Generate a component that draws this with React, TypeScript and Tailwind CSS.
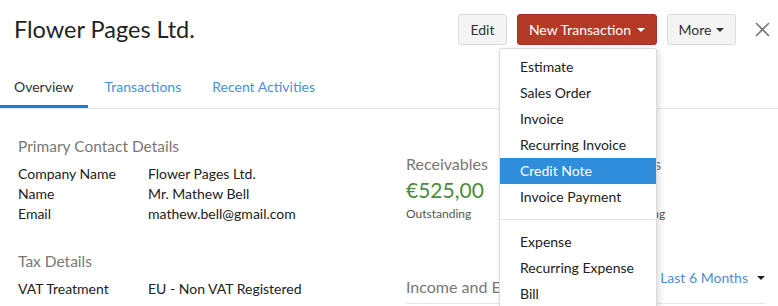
import React from "react";

const font = { fontFamily: "Lato, 'Open Sans', Arial, sans-serif" };

export default function App() {
  const group1 = ["Estimate", "Sales Order", "Invoice", "Recurring Invoice", "Credit Note", "Invoice Payment"];
  const group2 = ["Expense", "Recurring Expense", "Bill"];
  return (
    <div className="relative w-[778px] h-[306px] overflow-hidden bg-white text-[#222]" style={font}>
      {/* Header */}
      <div className="flex items-start justify-between pl-[14px] pr-[8px] pt-[14px]">
        <h1 className="text-[23.5px] leading-[31px] text-[#222]">Flower Pages Ltd.</h1>
        <div className="flex items-center">
          <button className="h-[31px] w-[49px] rounded-[3px] border border-[#dcdcdc] bg-[#f4f4f4] text-[14px] text-[#333]">
            Edit
          </button>
          <div className="relative ml-[10px]">
            <button className="flex h-[31px] w-[140px] items-center justify-center gap-[6px] rounded-[3px] border border-[#a33223] bg-[#b43a27] text-[14px] text-white">
              New Transaction
              <span className="mt-[1px] h-0 w-0 border-x-[4px] border-t-[4px] border-x-transparent border-t-white" />
            </button>
          </div>
          <button className="ml-[10px] flex h-[31px] w-[69px] items-center justify-center gap-[5px] rounded-[3px] border border-[#dcdcdc] bg-[#f4f4f4] text-[14px] text-[#333]">
            More
            <span className="mt-[1px] h-0 w-0 border-x-[4px] border-t-[4px] border-x-transparent border-t-[#333]" />
          </button>
          <svg className="ml-[19px]" width="15" height="15" viewBox="0 0 15 15">
            <path d="M1 1 L14 14 M14 1 L1 14" stroke="#777" strokeWidth="1.6" fill="none" />
          </svg>
        </div>
      </div>

      {/* Tabs */}
      <div className="mt-[31px] flex gap-[3px] border-b border-[#e6e6e6] text-[14px]">
        <div className="border-b-[3px] border-[#1b7fd6] px-[14px] pb-[8px] text-[#333]">Overview</div>
        <div className="px-[14px] pb-[8px] text-[#4a8fd8]">Transactions</div>
        <div className="px-[14px] pb-[8px] text-[#4a8fd8]">Recent Activities</div>
      </div>

      {/* Body */}
      <div className="flex pt-[27px]">
        <div className="w-[406px] shrink-0 pl-[18px]">
          <div className="text-[15.5px] leading-[20px] text-[#777]">Primary Contact Details</div>
          <div className="mt-[8px] grid grid-cols-[130px_1fr] text-[14px] leading-[20px] text-[#222]">
            <div>Company Name</div>
            <div>Flower Pages Ltd.</div>
            <div>Name</div>
            <div>Mr. Mathew Bell</div>
            <div>Email</div>
            <div>mathew.bell@gmail.com</div>
          </div>
          <div className="mt-[27px] text-[15.5px] leading-[20px] text-[#777]">Tax Details</div>
          <div className="mt-[8px] grid grid-cols-[130px_1fr] text-[14px] leading-[20px] text-[#222]">
            <div>VAT Treatment</div>
            <div>EU - Non VAT Registered</div>
          </div>
        </div>
        <div className="flex-1 pr-[13px]">
          <div className="flex pt-[18px]">
            <div className="w-[194px]">
              <div className="text-[16px] leading-[20px] text-[#777]">Receivables</div>
              <div className="mt-[3px] text-[21px] leading-[26px] text-[#4b8b3b]">€525,00</div>
              <div className="mt-[4px] text-[12px] leading-[14px] text-[#555]">Outstanding</div>
            </div>
            <div>
              <div className="text-[16px] leading-[20px] text-[#777]">Payables</div>
              <div className="mt-[3px] text-[21px] leading-[26px] text-[#c0392b]">€0,00</div>
              <div className="mt-[4px] text-[12px] leading-[14px] text-[#555]">Outstanding</div>
            </div>
          </div>
          <div className="mt-[47px] flex items-start justify-between border-b border-[#e6e6e6] pb-[6px]">
            <div className="mt-[9px] text-[16px] leading-[20px] text-[#777]">Income and Expense</div>
            <div className="flex items-center gap-[9px] text-[14px] leading-[20px] text-[#4a8fd8]">
              Last 6 Months
              <span className="h-0 w-0 border-x-[4px] border-t-[4px] border-x-transparent border-t-[#222]" />
            </div>
          </div>
        </div>
      </div>

      {/* Dropdown menu */}
      <div className="absolute left-[499px] top-[48px] w-[158px] rounded-[3px] border border-[#dcdcdc] bg-white pt-[5px] pb-[7px] shadow-[2px_2px_6px_rgba(0,0,0,0.15)]">
        {group1.map((t) => (
          <div
            key={t}
            className={
              t === "Credit Note"
                ? "h-[26px] bg-[#2f8ddb] pl-[20px] text-[14px] leading-[26px] text-white"
                : "h-[26px] pl-[20px] text-[14px] leading-[26px] text-[#222]"
            }
          >
            {t}
          </div>
        ))}
        <div className="my-[9px] border-t border-[#e2e2e2]" />
        {group2.map((t) => (
          <div key={t} className="h-[26px] pl-[20px] text-[14px] leading-[26px] text-[#222]">
            {t}
          </div>
        ))}
      </div>
    </div>
  );
}
